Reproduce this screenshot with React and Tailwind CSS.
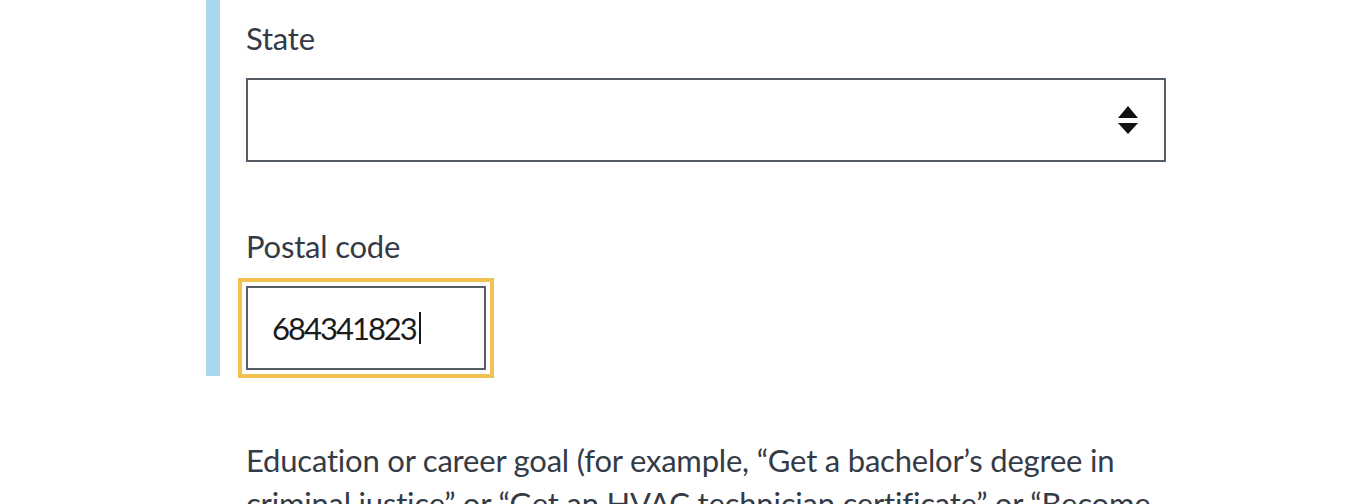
import React from "react";

export default function App() {
  return (
    <div className="w-[1360px] h-[504px] overflow-hidden bg-white text-[#343b46] font-['Lato','Noto_Sans',sans-serif]">
      <div className="pl-[206px]">
        <div className="border-l-[14px] border-[#a9d8ee] pl-[26px] pt-[18px] pb-[6px]">
          <label className="block text-[31px] leading-[40px] tracking-[-0.2px]">State</label>
          <div className="mt-[20px] w-[920px] h-[84px] border-2 border-[#565c65] flex items-center justify-end pr-[26px]">
            <svg width="20" height="28" viewBox="0 0 20 28">
              <polygon points="10,0 20,12 0,12" fill="#111" />
              <polygon points="0,17 20,17 10,28" fill="#111" />
            </svg>
          </div>
          <label className="block mt-[64px] text-[31px] leading-[40px] tracking-[-0.2px]">Postal code</label>
          <div className="mt-[20px] w-[240px] h-[84px] border-2 border-[#565c65] outline-4 outline-offset-4 outline-[#f1c24f] outline-solid flex items-center pl-[24px] text-[31px] text-[#1b1b1b]">
            <span className="tracking-[-2px]">684341823</span>
            <span className="inline-block w-[2px] h-[32px] bg-[#1b1b1b] ml-[3px]"></span>
          </div>
        </div>
        <p className="pl-[40px] mt-[63px] w-[960px] text-[31px] leading-[43px] tracking-[-0.2px]">
          Education or career goal (for example, “Get a bachelor’s degree in criminal justice” or “Get an HVAC technician certificate” or “Become a registered nurse”)
        </p>
      </div>
    </div>
  );
}
